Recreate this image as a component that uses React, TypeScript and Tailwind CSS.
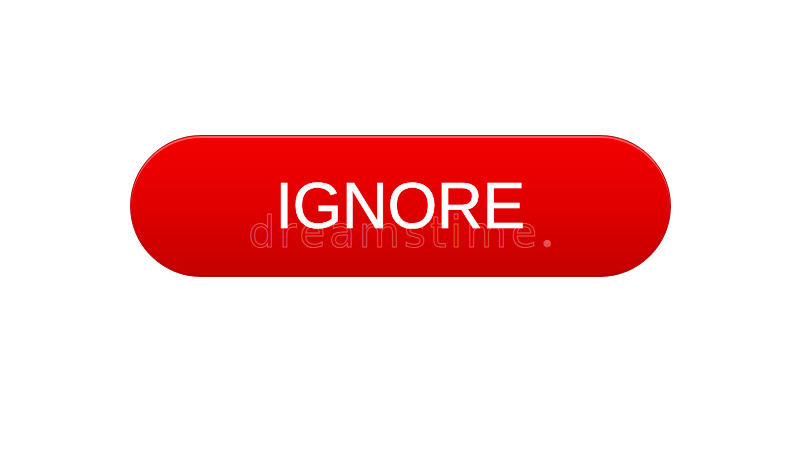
export default function App() {
  return (
    <div className="w-[800px] h-[450px] bg-white flex justify-center pt-[135px]">
      <button
        type="button"
        className="relative w-[541px] h-[142px] rounded-full border border-[#b80a0a] bg-gradient-to-b from-[#f50000] via-[#e00000] to-[#c40000] shadow-[inset_0_2px_0_rgba(255,170,170,0.55),inset_0_-1px_0_rgba(120,0,0,0.35)] flex items-center justify-center"
      >
        {/* faint outlined stamp behind the label */}
        <span className="absolute left-[118px] top-[76px] text-[42px] leading-none tracking-[4px] text-transparent [-webkit-text-stroke:1px_rgba(255,190,190,0.45)] font-['DejaVu_Sans',sans-serif]">
          dreamstime
          <span className="text-[9px] ml-[2px] tracking-normal">®</span>
        </span>
        <span className="relative text-white text-[64px] leading-none font-['Liberation_Sans',Arial,sans-serif] tracking-[-0.5px] [-webkit-text-stroke:0.6px_white]">
          IGNORE
        </span>
      </button>
    </div>
  );
}
